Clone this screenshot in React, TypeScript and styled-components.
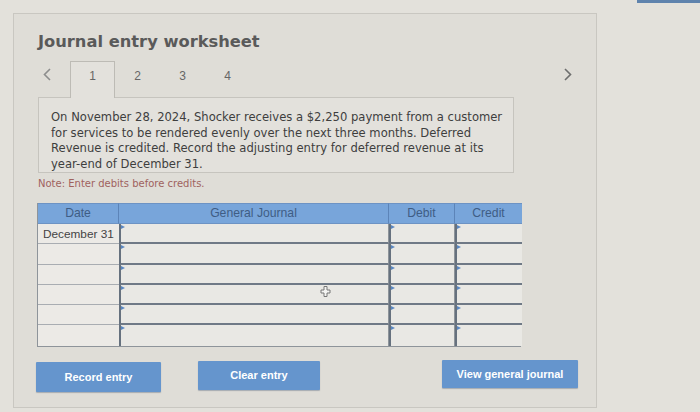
import React from "react";
import styled, { createGlobalStyle } from "styled-components";

const Global = createGlobalStyle`
  html, body { margin: 0; padding: 0; background: #e3e1db; }
  body { width: 700px; height: 412px; overflow: hidden; }
`;

const Page = styled.div`
  display: flex;
  align-items: flex-start;
  padding-left: 13px;
`;

const Panel = styled.div`
  margin-top: 13px;
  width: 584px;
  height: 395px;
  box-sizing: border-box;
  background: #dfddd7;
  border: 1px solid #c9c7c1;
  padding: 17px 0 0 24px;
  display: flex;
  flex-direction: column;
`;

const Side = styled.div`
  margin-left: 40px;
  flex: 1;
`;

const TopStrip = styled.div`
  height: 3px;
  background: #5f83ad;
`;

const Title = styled.h1`
  margin: 0;
  font-family: "DejaVu Sans", Verdana, sans-serif;
  font-weight: bold;
  font-size: 16.3px;
  line-height: 21px;
  color: #5a5a5a;
`;

const TabRow = styled.div`
  display: flex;
  align-items: stretch;
  height: 36px;
  margin-top: 9px;
  width: 534px;
  position: relative;
  z-index: 1;
`;

const Arrow = styled.div<{ $right?: boolean }>`
  width: 32px;
  display: flex;
  align-items: center;
  justify-content: ${(p) => (p.$right ? "flex-end" : "flex-start")};
  padding-left: ${(p) => (p.$right ? "0" : "5px")};
  box-sizing: border-box;
  padding-bottom: 9px;
  margin-left: ${(p) => (p.$right ? "auto" : "0")};
`;

const Tab = styled.div<{ $active?: boolean }>`
  width: 45px;
  box-sizing: border-box;
  display: flex;
  align-items: center;
  justify-content: center;
  padding-bottom: 8px;
  font-family: "Liberation Sans", Arial, sans-serif;
  font-size: 12px;
  color: #666;
  border: 1px solid ${(p) => (p.$active ? "#bdbbb5" : "transparent")};
  border-bottom: none;
  background: ${(p) => (p.$active ? "#e3e1dc" : "transparent")};
  margin-bottom: -1px;
`;

const Question = styled.div`
  width: 476px;
  box-sizing: border-box;
  border: 1px solid #c6c4be;
  background: #e3e1dc;
  padding: 12px 8px 0 12px;
  font-family: "DejaVu Sans", Verdana, sans-serif;
  font-size: 11.58px;
  line-height: 15.5px;
  color: #3e3e3e;
`;

const Note = styled.div`
  margin-top: 5px;
  font-family: "DejaVu Sans", Verdana, sans-serif;
  font-size: 10px;
  color: #a0625e;
`;

const Table = styled.div`
  margin-top: 14px;
  margin-left: -1px;
  width: 484px;
  display: grid;
  grid-template-columns: 81px 270px 66px 67px;
  border: 1px solid #8e949a;
  border-top: none;
  box-sizing: border-box;
`;

const Head = styled.div<{ $last?: boolean }>`
  height: 21px;
  background: #78a5da;
  border-top: 1px solid #6d93c4;
  border-right: ${(p) => (p.$last ? "none" : "1px solid #5c84b8")};
  border-bottom: 1px solid #6d93c4;
  box-sizing: border-box;
  display: flex;
  align-items: center;
  justify-content: center;
  font-family: "Liberation Sans", Arial, sans-serif;
  font-size: 12.2px;
  color: #3f5d85;
  padding-bottom: 1px;
`;

const DateCell = styled.div<{ $lastRow?: boolean }>`
  height: 20.3px;
  box-sizing: border-box;
  background: #eceae6;
  border-bottom: ${(p) => (p.$lastRow ? "none" : "1px solid #a9adb2")};
  display: flex;
  align-items: center;
  padding-left: 5px;
  font-family: "Liberation Sans", Arial, sans-serif;
  font-size: 11.8px;
  color: #444;
`;

const Input = styled.div<{ $lastRow?: boolean; $lastCol?: boolean }>`
  position: relative;
  height: 20.3px;
  box-sizing: border-box;
  background: #e9e8e4;
  border-left: 2px solid #66717e;
  border-right: ${(p) => (p.$lastCol ? "none" : "1px solid #8e949a")};
  border-bottom: ${(p) => (p.$lastRow ? "none" : "2px solid #6f7986")};
  &::before {
    content: "";
    position: absolute;
    left: 0;
    top: 1px;
    border-left: 4px solid #5b87c0;
    border-top: 2.5px solid transparent;
    border-bottom: 2.5px solid transparent;
  }
`;

const Cursor = styled.svg`
  position: absolute;
  left: 199px;
  top: 0px;
`;

const Buttons = styled.div`
  display: flex;
  align-items: flex-start;
  margin-top: 14px;
  margin-left: -2px;
`;

const Button = styled.button<{ $w: number; $h: number; $dy: number; $ml: number }>`
  width: ${(p) => p.$w}px;
  height: ${(p) => p.$h}px;
  margin-top: ${(p) => p.$dy}px;
  margin-left: ${(p) => p.$ml}px;
  border: none;
  border-radius: 1px;
  background: #6595cd;
  box-shadow: 0 1px 1px rgba(60, 80, 110, 0.35);
  color: #fff;
  font-family: "Liberation Sans", Arial, sans-serif;
  font-weight: bold;
  font-size: 11px;
  padding: 0;
  cursor: pointer;
`;

const rows = [0, 1, 2, 3, 4, 5];

export default function App() {
  return (
    <>
      <Global />
      <Page>
        <Panel>
          <Title>Journal entry worksheet</Title>
          <TabRow>
            <Arrow>
              <svg width="8" height="13" viewBox="0 0 8 13">
                <path d="M7 1 L1.5 6.5 L7 12" fill="none" stroke="#8d8d8d" strokeWidth="1.6" />
              </svg>
            </Arrow>
            <Tab $active>1</Tab>
            <Tab>2</Tab>
            <Tab>3</Tab>
            <Tab>4</Tab>
            <Arrow $right>
              <svg width="8" height="13" viewBox="0 0 8 13">
                <path d="M1 1 L6.5 6.5 L1 12" fill="none" stroke="#6e6e6e" strokeWidth="1.6" />
              </svg>
            </Arrow>
          </TabRow>
          <Question>
            On November 28, 2024, Shocker receives a $2,250 payment from a customer for services
            to be rendered evenly over the next three months. Deferred Revenue is credited. Record
            the adjusting entry for deferred revenue at its year-end of December 31.
          </Question>
          <Note>Note: Enter debits before credits.</Note>
          <Table>
            <Head>Date</Head>
            <Head>General Journal</Head>
            <Head>Debit</Head>
            <Head $last>Credit</Head>
            {rows.map((r) => (
              <React.Fragment key={r}>
                <DateCell $lastRow={r === 5}>{r === 0 ? "December 31" : ""}</DateCell>
                <Input $lastRow={r === 5}>
                  {r === 3 && (
                    <Cursor width="11" height="13" viewBox="0 0 11 13">
                      <path
                        d="M4 1.5 h3 v3.5 h3 v3 h-3 v3.5 h-3 v-3.5 h-3 v-3 h3 z"
                        fill="#f4f4f2"
                        stroke="#777"
                        strokeWidth="1"
                      />
                    </Cursor>
                  )}
                </Input>
                <Input $lastRow={r === 5} />
                <Input $lastRow={r === 5} $lastCol />
              </React.Fragment>
            ))}
          </Table>
          <Buttons>
            <Button $w={125} $h={30} $dy={1} $ml={0}>Record entry</Button>
            <Button $w={122} $h={29} $dy={0} $ml={37}>Clear entry</Button>
            <Button $w={136} $h={28} $dy={-1} $ml={122}>View general journal</Button>
          </Buttons>
        </Panel>
        <Side>
          <TopStrip />
        </Side>
      </Page>
    </>
  );
}
